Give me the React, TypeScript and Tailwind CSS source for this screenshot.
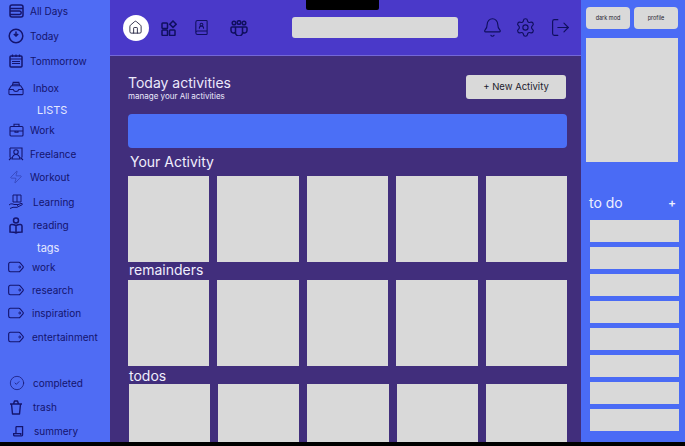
import { Bell, BookUser, CircleCheck, House, LogOut, Settings, Zap } from 'lucide-react';
import type { ReactNode } from 'react';

const ico = 'fill-none stroke-current stroke-[1.5]';

function Tag() {
  return (
    <svg width="17" height="12" viewBox="0 0 17 12" className="fill-none stroke-current stroke-[1.2]">
      <path d="M2.500 1h9c.6 0 1 .2 1.400.7l3 3.500a1.200 1.200 0 0 1 0 1.600l-3 3.500c-.4.5-.8.7-1.400.7h-9A1.800 1.800 0 0 1 .7 9.200V2.800A1.800 1.800 0 0 1 2.500 1z" />
      <circle cx="12.500" cy="6" r="1" strokeWidth="1" />
    </svg>
  );
}

function AllDays() {
  return (
    <svg width="15" height="14" viewBox="0 0 15 14" className={ico}>
      <rect x="1" y="1" width="13" height="12" rx="2" />
      <path d="M1 4.500h13M1 7h9.500a1.500 1.500 0 0 1 0 3.500H1" />
    </svg>
  );
}

function Clock() {
  return (
    <svg width="16" height="16" viewBox="0 0 16 16" className={ico}>
      <circle cx="8" cy="8" r="6.800" />
      <path d="M8 3.500v4.500M5.800 6l2.200 2 2.200-2" />
    </svg>
  );
}

function Calendar() {
  return (
    <svg width="14" height="14" viewBox="0 0 14 14" className={ico}>
      <rect x="1" y="2" width="12" height="11" rx="1" />
      <path d="M1 5h12M3.500 .5V3M7 .5V3M10.500 .5V3M3 7.500h8M3 9.500h8" strokeWidth="1.200" />
    </svg>
  );
}

function Tray() {
  return (
    <svg width="17" height="15" viewBox="0 0 17 15" className="fill-none stroke-current stroke-[1.100]">
      <path d="M1 8.500V13a1 1 0 0 0 1 1h13a1 1 0 0 0 1-1V8.500l-2.500-4h-10zM1 8.500h4.500c.5 1.800 1.500 2.300 3 2.300s2.500-.5 3-2.300H16" />
      <path d="M4.500 4.500 5.500 1h6l1 3.500M5 3h7" />
    </svg>
  );
}

function Case() {
  return (
    <svg width="15" height="14" viewBox="0 0 15 14" className="fill-none stroke-current stroke-[1.100]">
      <rect x="1" y="3.500" width="13" height="9.500" rx="1" />
      <path d="M5 3.500V1.200h5v2.300M1 8h13M6 8v1.300h3V8" />
    </svg>
  );
}

function Contact() {
  return (
    <svg width="16" height="14" viewBox="0 0 16 14" className="fill-none stroke-current stroke-[1.100]">
      <path d="M2 1h12v9.500M2 1v9.500M1 13l2.500-2.500M15 13l-2.500-2.500" />
      <circle cx="8" cy="5" r="2.200" />
      <path d="M4 12c.5-3 2-4.500 4-4.500s3.500 1.500 4 4.500z" />
    </svg>
  );
}

function Basket() {
  return (
    <svg width="14" height="15" viewBox="0 0 14 15" className="fill-none stroke-current stroke-[1.400]">
      <path d="M1 4h12M4.500 4l1-3h3l1 3M2.500 4 3.500 14h7l1-10" strokeLinejoin="round" />
    </svg>
  );
}

function Learning() {
  return (
    <svg width="16" height="16" viewBox="0 0 16 16" className={ico} strokeWidth="1">
      <path d="M5 1h8v7H5zM9 1v7M1 11c2-2 4-1 5-.5h3c1 0 1 1.200 0 1.200M9 11l4-1.500c1.500-.3 2 .6 1 1.300l-5 2.500H5L2 14.500" strokeWidth="1" />
    </svg>
  );
}

function Reading() {
  return (
    <svg width="14" height="17" viewBox="0 0 14 17" className={ico}>
      <circle cx="7" cy="3.500" r="2.500" />
      <path d="M1 9c0-1.500 2-2.500 6-.5 4-2 6-1 6 .5v6c-3 0-5 0-6 1-1-1-3-1-6-1zM7 8.500V16" />
    </svg>
  );
}

function Summery() {
  return (
    <svg width="11" height="11" viewBox="0 0 13 13" className="translate-x-[2px] fill-none stroke-current stroke-[1.500]">
      <path d="M3.500 9V1.500a.8.8 0 0 1 .8-.8h7v10a1 1 0 0 1-1 1H2a1.300 1.300 0 0 1-1.300-1.300V9h8.500v1.500" />
    </svg>
  );
}

function Apps() {
  return (
    <svg width="16" height="16" viewBox="0 0 16 16" className={ico}>
      <rect x="1" y="3" width="5.500" height="5.500" rx=".8" />
      <rect x="1" y="10" width="5.500" height="5.500" rx=".8" />
      <rect x="8.500" y="10" width="5.500" height="5.500" rx=".8" />
      <path d="M12 1l3.200 3.200L12 7.400 8.800 4.200z" />
    </svg>
  );
}

function Team() {
  return (
    <svg width="18" height="16" viewBox="0 0 18 16" className={ico}>
      <circle cx="4" cy="3" r="1.800" />
      <circle cx="9" cy="2.500" r="1.800" />
      <circle cx="14" cy="3" r="1.800" />
      <path d="M5.500 7h7v5.500a3.500 3.500 0 0 1-7 0zM5.500 7H2a1 1 0 0 0-1 1v2.500A2.500 2.500 0 0 0 5.500 12M12.500 7H16a1 1 0 0 1 1 1v2.500A2.500 2.500 0 0 1 12.500 12" />
    </svg>
  );
}

function NavRow({ icon, label, top, textLeft }: { icon: ReactNode; label: string; top: string; textLeft: string }) {
  return (
    <div className={`flex h-4 items-center ${top}`}>
      <span className="ml-2 flex w-[16px] justify-center">{icon}</span>
      <span className={textLeft}>{label}</span>
    </div>
  );
}

function Heading({ children, top }: { children: ReactNode; top: string }) {
  return <div className={`h-4 pl-[37px] text-[11px] leading-4 text-[#e4e8ff] ${top}`}>{children}</div>;
}

function CardRow({ left, height }: { left?: boolean; height: string }) {
  return (
    <div className={`grid grid-cols-5 gap-x-2 ${left ? 'ml-px' : ''} ${height}`}>
      {[0, 1, 2, 3, 4].map((n) => (
        <div key={n} className="bg-[#d9d9d9]" />
      ))}
    </div>
  );
}

export default function App() {
  return (
    <div className="relative flex h-[446px] w-[685px] flex-col overflow-hidden bg-black font-['Inter','Liberation_Sans',sans-serif]">
      <div className="flex h-[442px]">
        <aside className="flex w-[110px] shrink-0 flex-col bg-[#4f6cf4] pt-[3px] text-[10px] text-[#14146e]">
          <NavRow top="" textLeft="ml-[6px]" icon={<AllDays />} label="All Days" />
          <NavRow top="mt-[9px]" textLeft="ml-[6px]" icon={<Clock />} label="Today" />
          <NavRow top="mt-[9px]" textLeft="ml-[6px]" icon={<Calendar />} label="Tommorrow" />
          <NavRow top="mt-[11px]" textLeft="ml-[9px]" icon={<Tray />} label="Inbox" />
          <Heading top="mt-[6px]">LISTS</Heading>
          <NavRow top="mt-1" textLeft="ml-[6px]" icon={<Case />} label="Work" />
          <NavRow top="mt-2" textLeft="ml-[6px]" icon={<Contact />} label="Freelance" />
          <NavRow top="mt-[7px]" textLeft="ml-[6px]" icon={<Zap size={14} strokeWidth={1} className="opacity-60" />} label="Workout" />
          <NavRow top="mt-[9px]" textLeft="ml-[9px]" icon={<Learning />} label="Learning" />
          <NavRow top="mt-[7px]" textLeft="ml-[9px]" icon={<Reading />} label="reading" />
          <Heading top="mt-[7px]">tags</Heading>
          <NavRow top="mt-[3px]" textLeft="ml-2" icon={<Tag />} label="work" />
          <NavRow top="mt-[7px]" textLeft="ml-2" icon={<Tag />} label="research" />
          <NavRow top="mt-[7px]" textLeft="ml-2" icon={<Tag />} label="inspiration" />
          <NavRow top="mt-2" textLeft="ml-2" icon={<Tag />} label="entertainment" />
          <NavRow top="mt-[30px]" textLeft="ml-[9px]" icon={<CircleCheck size={16} strokeWidth={1.1} className="translate-x-px" />} label="completed" />
          <NavRow top="mt-2" textLeft="ml-[9px]" icon={<Basket />} label="trash" />
          <NavRow top="mt-2" textLeft="ml-[10px]" icon={<Summery />} label="summery" />
        </aside>

        <main className="flex min-w-0 flex-1 flex-col overflow-hidden bg-[#412e7c]">
          <header className="flex h-[56px] shrink-0 items-center border-b border-[#7468d8] bg-[#4a39c9] pl-[13px] pr-[10px] text-[#0f0f5e]">
            <div className="flex h-[26px] w-[26px] items-center justify-center rounded-full bg-white">
              <House size={15} strokeWidth={1.4} className="text-[#1b1b3a]" />
            </div>
            <span className="ml-[12px]"><Apps /></span>
            <BookUser size={17} strokeWidth={1.5} className="ml-[16px]" />
            <span className="ml-[20px]"><Team /></span>
            <div className="ml-[44px] h-[21px] w-[167px] rounded-[3px] bg-[#d9d9d9]" />
            <Bell size={21} strokeWidth={1.3} className="ml-[24px]" />
            <Settings size={21} strokeWidth={1.3} className="ml-[12px]" />
            <LogOut size={21} strokeWidth={1.3} className="ml-[14px]" />
          </header>

          <div className="flex flex-col pl-[18px] pr-[14px]">
            <div className="mt-[19px] flex h-[25px] items-start justify-between">
              <div>
                <div className="text-[14px] leading-[16px] text-[#ece9fb]">Today activities</div>
                <div className="mt-px text-[8px] leading-[8px] text-[#ece9fb]">manage your All activities</div>
              </div>
              <button className="mr-px h-6 w-[100px] rounded-[3px] bg-[#d9d9d9] text-[9.5px] text-[#1c1c2e]">+ New Activity</button>
            </div>
            <div className="mt-[14px] h-[34px] shrink-0 rounded-[4px] bg-[#4b6ff6]" />
            <div className="mt-[6px] h-[22px] pl-[2px] text-[14px] leading-[15px] text-[#f0eefc]">Your Activity</div>
            <CardRow height="h-[86px]" />
            <div className="ml-px h-[18px] text-[14px] leading-[16px] text-[#f0eefc]">remainders</div>
            <CardRow height="h-[86px]" />
            <div className="ml-px h-[18px] text-[14px] leading-[20px] text-[#f0eefc]">todos</div>
            <CardRow left height="h-[58px]" />
          </div>
        </main>

        <aside className="flex w-[104px] shrink-0 flex-col bg-[#4a6bf5] pr-[6px] pt-[7px]">
          <div className="ml-[5px] flex gap-1">
            <div className="flex h-[22px] w-11 items-center justify-center rounded-[4px] bg-[#d9d9d9] text-[5.5px] text-[#1c1c2e]">dark mod</div>
            <div className="flex h-[22px] w-11 items-center justify-center rounded-[4px] bg-[#d9d9d9] text-[5.5px] text-[#1c1c2e]">profile</div>
          </div>
          <div className="ml-[5px] mt-[9px] h-[124px] w-[92px] bg-[#d9d9d9]" />
          <div className="mt-[32px] flex h-[18px] items-center justify-between pl-2 pr-[3px] text-[14px] leading-4 text-[#eef0ff]">
            <span>to do</span>
            <span className="text-[12px] font-semibold">+</span>
          </div>
          <div className="ml-[9px] mt-[8px] flex flex-col gap-[5px]">
            {[0, 1, 2, 3, 4, 5, 6, 7].map((n) => (
              <div key={n} className="h-[22px] w-[89px] bg-[#d9d9d9]" />
            ))}
          </div>
        </aside>
      </div>

      <div className="absolute left-[306px] top-0 h-[10px] w-[73px] rounded-b-[2px] bg-black" />
      <div className="h-1 bg-black" />
    </div>
  );
}
